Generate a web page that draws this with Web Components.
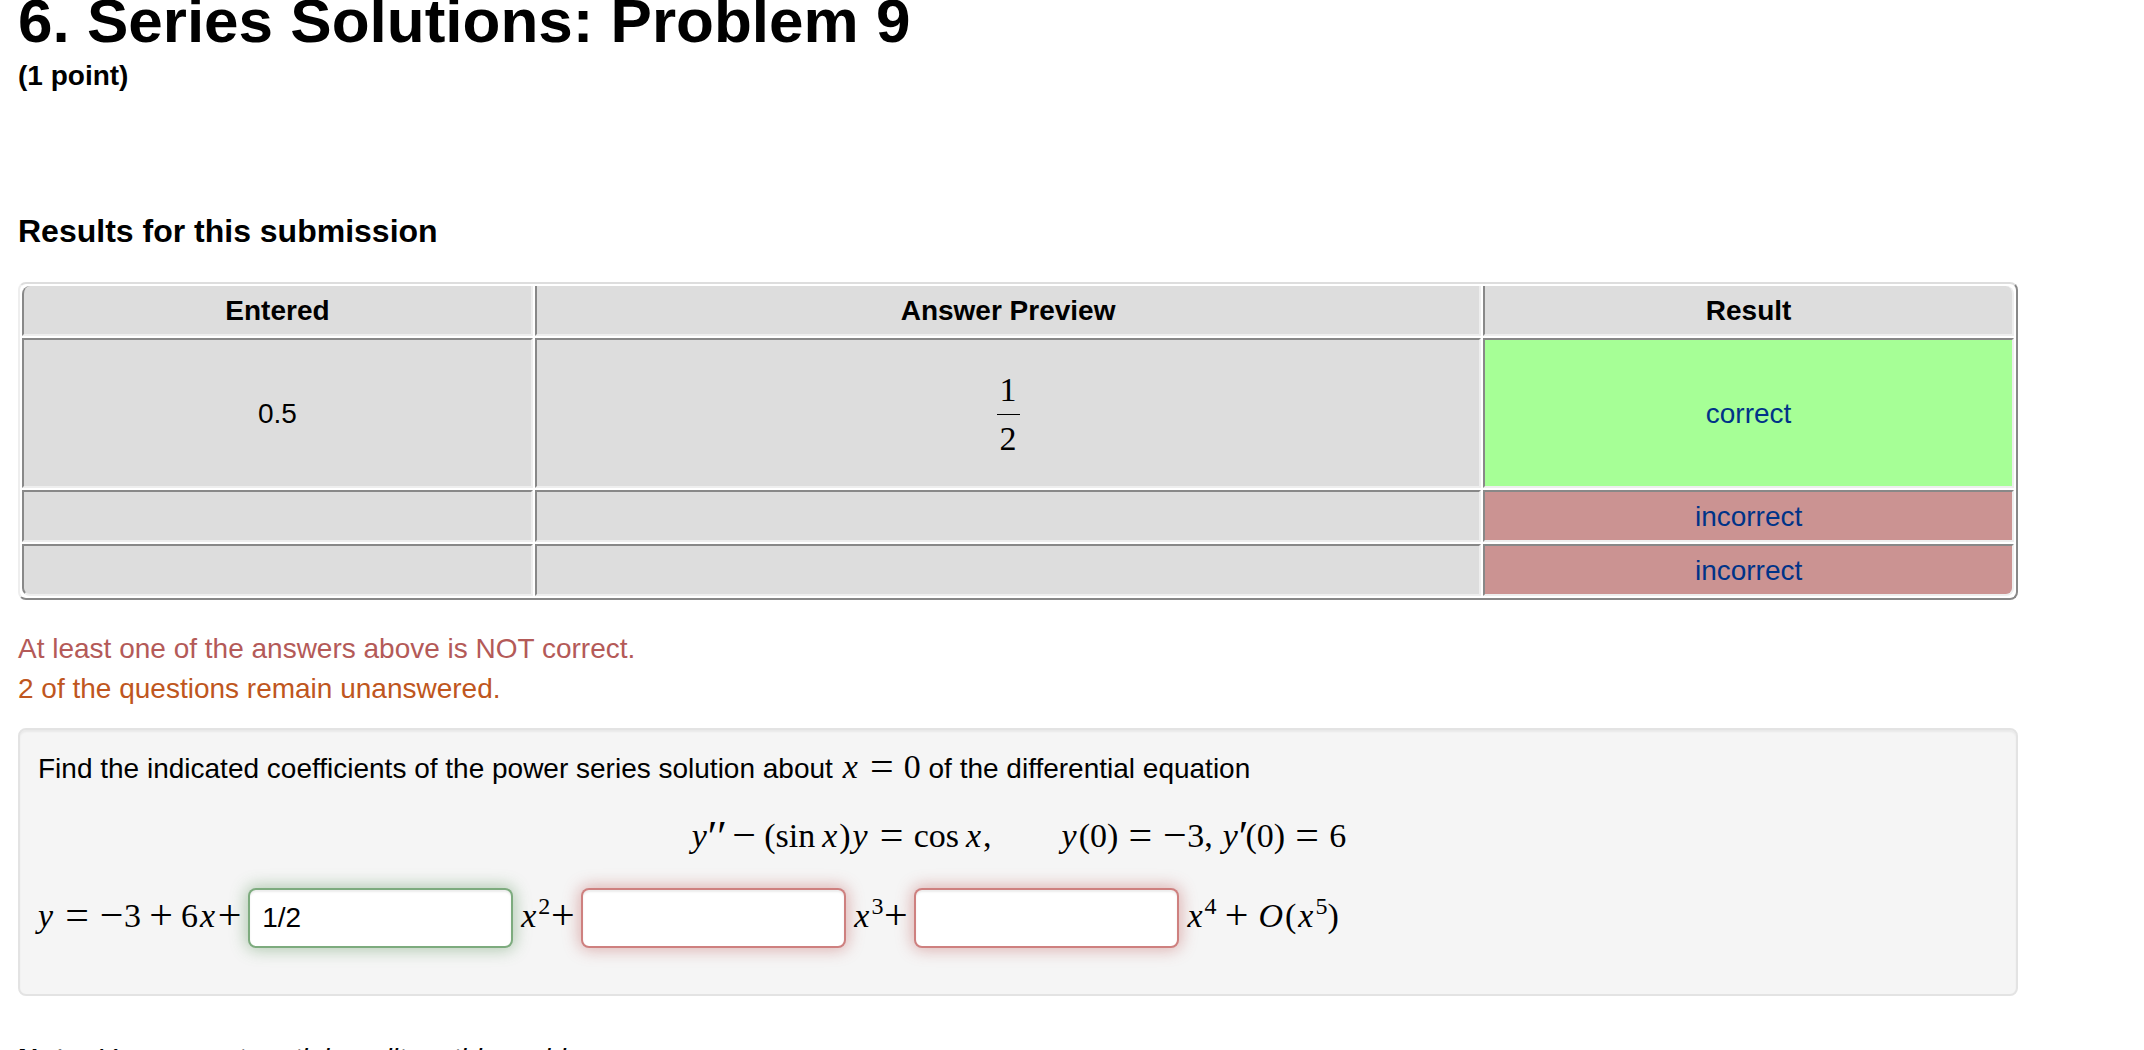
<!DOCTYPE html>
<html lang="en">
<head>
  <meta charset="utf-8">
  <title>6. Series Solutions: Problem 9</title>
  <style>
    body {
      margin: 0;
      padding: 0 126px 40px 18px;
      background: #fff;
      color: #000;
      font: 28px/40px "Liberation Sans", Arial, sans-serif;
    }
  </style>
</head>
<body>
  <problem-page></problem-page>

<script>
// Small helper shared by the elements below
function attach(el, html) {
  const template = document.createElement('template');
  template.innerHTML = html;
  el.attachShadow({ mode: 'open' });
  el.shadowRoot.appendChild(template.content.cloneNode(true));
}

// Binary operator or relation, centered in its own box
class MathOp extends HTMLElement {
  constructor() {
    super();
    attach(this, `
      <style>
        :host {
          display: inline-block;
          width: 40px;
          font-size: 42px;
          line-height: 0;
          text-align: center;
          vertical-align: -2px;
        }
        :host([rel]) { width: 44px; }
        :host([tight]) { width: 25px; }
      </style>
      <slot></slot>
    `);
  }
}
customElements.define('math-op', MathOp);

class MathFormula extends HTMLElement {
  constructor() {
    super();
    attach(this, `
      <style>
        :host {
          display: inline-block;
          font-family: "Liberation Serif", "Times New Roman", serif;
          font-size: 34px;
          line-height: 32px;
          white-space: nowrap;
        }
        ::slotted(i) { margin: 0 2px; }
        ::slotted(.first) { margin-left: 0; }
        ::slotted(sup) {
          font-size: 24px;
          line-height: 0;
          vertical-align: 13px;
        }
        ::slotted(.prime) {
          margin-left: -4px;
          font-size: 44px;
          vertical-align: -4px;
        }
        ::slotted(.fn) { margin-right: 5px; }
        ::slotted(.comma) { margin-right: 8px; }
        ::slotted(.quad) { margin-right: 68px; }
      </style>
      <slot></slot>
    `);
  }
}
customElements.define('math-formula', MathFormula);

class MathFraction extends HTMLElement {
  constructor() {
    super();
    attach(this, `
      <style>
        :host {
          display: inline-flex;
          flex-direction: column;
          vertical-align: middle;
          font: 34px/48px "Liberation Serif", "Times New Roman", serif;
          text-align: center;
        }
        .num {
          padding: 0 3px;
          border-bottom: 1px solid #000;
        }
      </style>
      <span class="num"><slot name="num"></slot></span>
      <span><slot name="den"></slot></span>
    `);
  }
}
customElements.define('math-fraction', MathFraction);

class AnswerBlank extends HTMLElement {
  constructor() {
    super();
    attach(this, `
      <style>
        :host {
          --blank-color: 185, 74, 72;
          display: inline-block;
        }
        :host([correct]) { --blank-color: 70, 136, 71; }
        input {
          display: block;
          box-sizing: border-box;
          width: 265px;
          height: 60px;
          padding: 8px 12px;
          border: 2px solid rgba(var(--blank-color), 0.7);
          border-radius: 8px;
          background: #fff;
          color: #000;
          font: inherit;
          outline: none;
          box-shadow: inset 0 2px 2px rgba(0, 0, 0, 0.075), 0 0 16px 2px rgba(var(--blank-color), 0.4);
        }
      </style>
      <input type="text">
    `);
  }

  connectedCallback() {
    this.$input = this.shadowRoot.querySelector('input');
    this.$input.value = this.getAttribute('value') || '';
    this.$input.setAttribute('aria-label', this.getAttribute('label'));
  }
}
customElements.define('answer-blank', AnswerBlank);

class ResultsTable extends HTMLElement {
  constructor() {
    super();
    attach(this, `
      <style>
        :host { display: block; }
        table {
          width: 100%;
          table-layout: fixed;
          border: 2px solid;
          border-color: #ddd #888 #888 #eee;
          border-radius: 8px;
          border-spacing: 2px;
          border-collapse: separate;
        }
        .entered { width: 25.7%; }
        .preview { width: 47.6%; }
        th, td {
          box-sizing: border-box;
          height: 52px;
          padding: 3px 4px 1px;
          border: 2px solid;
          border-color: #888 #eee #eee #888;
          background: #ddd;
          text-align: center;
          vertical-align: middle;
        }
        th {
          height: 50px;
          border-top: 0;
        }
        tr.tall td { height: 150px; }
        td.correct { background: #a6ff96; }
        td.incorrect { background: #cb9392; }
        thead th:first-child { border-top-left-radius: 8px; }
        thead th:last-child { border-top-right-radius: 8px; }
        tbody tr:last-child td:first-child { border-bottom-left-radius: 8px; }
        tbody tr:last-child td:last-child { border-bottom-right-radius: 8px; }
        a {
          color: #038;
          text-decoration: none;
        }
      </style>
      <table>
        <colgroup>
          <col class="entered">
          <col class="preview">
          <col>
        </colgroup>
        <thead>
          <tr><th>Entered</th><th>Answer Preview</th><th>Result</th></tr>
        </thead>
        <tbody>
          <tr class="tall">
            <td>0.5</td>
            <td><math-fraction><span slot="num">1</span><span slot="den">2</span></math-fraction></td>
            <td class="correct"><a href="#">correct</a></td>
          </tr>
          <tr><td></td><td></td><td class="incorrect"><a href="#">incorrect</a></td></tr>
          <tr><td></td><td></td><td class="incorrect"><a href="#">incorrect</a></td></tr>
        </tbody>
      </table>
    `);
  }
}
customElements.define('results-table', ResultsTable);

class ProblemBody extends HTMLElement {
  constructor() {
    super();
    attach(this, `
      <style>
        :host {
          display: block;
          padding: 19px 18px 46px;
          border: 2px solid #e3e3e3;
          border-radius: 8px;
          background: #f5f5f5;
          box-shadow: inset 0 2px 2px rgba(0, 0, 0, 0.05);
        }
        p { margin: 0; }
        .display {
          margin: 29px 0 30px;
          text-align: center;
        }
        .series {
          display: flex;
          align-items: baseline;
          gap: 6px;
        }
      </style>
      <p>Find the indicated coefficients of the power series solution about
        <math-formula><i>x</i><math-op rel>=</math-op>0</math-formula>
        of the differential equation</p>
      <p class="display">
        <math-formula><i>y</i><sup class="prime"><i>′′</i></sup><math-op>−</math-op>(<span class="fn">sin</span><i>x</i>)<i>y</i><math-op rel>=</math-op><span class="fn">cos</span><i>x</i><span class="quad">,</span><i>y</i>(0)<math-op rel>=</math-op><math-op tight>−</math-op>3<span class="comma">,</span><i>y</i><sup class="prime"><i>′</i></sup>(0)<math-op rel>=</math-op>6</math-formula>
      </p>
      <div class="series">
        <math-formula><i class="first">y</i><math-op rel>=</math-op><math-op tight>−</math-op>3<math-op>+</math-op>6<i>x</i><math-op tight>+</math-op></math-formula>
        <answer-blank correct value="1/2" label="Coefficient of x squared"></answer-blank>
        <math-formula><i>x</i><sup>2</sup><math-op tight>+</math-op></math-formula>
        <answer-blank label="Coefficient of x cubed"></answer-blank>
        <math-formula><i>x</i><sup>3</sup><math-op tight>+</math-op></math-formula>
        <answer-blank label="Coefficient of x to the fourth"></answer-blank>
        <math-formula><i>x</i><sup>4</sup><math-op>+</math-op><i>O</i>(<i>x</i><sup>5</sup>)</math-formula>
      </div>
    `);
  }
}
customElements.define('problem-body', ProblemBody);

class ProblemPage extends HTMLElement {
  constructor() {
    super();
    attach(this, `
      <style>
        :host { display: block; }
        h1 {
          /* heading is tucked slightly under the top edge */
          margin: -14px 0 0;
          font-size: 62px;
          line-height: 70px;
        }
        h2 {
          margin: 115px 0 31px;
          font-size: 32px;
          line-height: 40px;
        }
        p { margin: 0; }
        .points { font-weight: bold; }
        .messages { margin: 29px 0 19px; }
        .wrong { color: #b45a58; }
        .unanswered { color: #bf5620; }
        .note { margin-top: 43px; }
      </style>
      <h1>6. Series Solutions: Problem 9</h1>
      <p class="points">(1 point)</p>
      <h2>Results for this submission</h2>
      <results-table></results-table>
      <div class="messages">
        <p class="wrong">At least one of the answers above is NOT correct.</p>
        <p class="unanswered">2 of the questions remain unanswered.</p>
      </div>
      <problem-body></problem-body>
      <p class="note"><b>Note:</b> <i>You can get partial credit on this problem.</i></p>
    `);
  }
}
customElements.define('problem-page', ProblemPage);
</script>
</body>
</html>
